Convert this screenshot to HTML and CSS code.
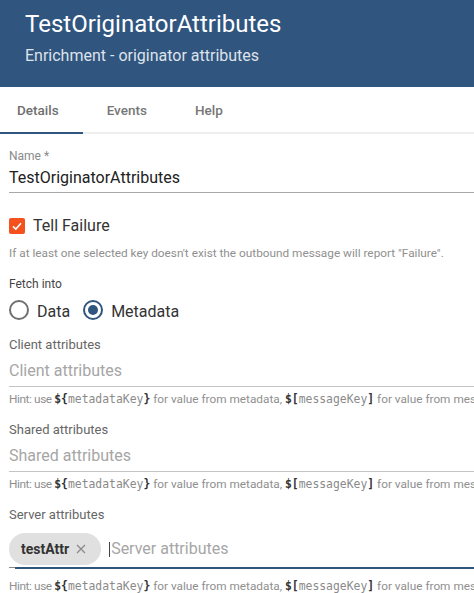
FILE: index.html
```html
<!DOCTYPE html>
<html lang="en">
<head>
<meta charset="utf-8">
<title>TestOriginatorAttributes</title>
<link rel="stylesheet" href="styles.css">
</head>
<body>
<div class="header">
  <div class="title">TestOriginatorAttributes</div>
  <div class="subtitle">Enrichment - originator attributes</div>
</div>
<div class="tabs">
  <div class="tab active">Details</div>
  <div class="tab">Events</div>
  <div class="tab">Help</div>
</div>
<div class="form">
  <div class="name-field">
    <div class="label">Name *</div>
    <div class="value">TestOriginatorAttributes</div>
  </div>
  <div class="checkbox-row">
    <span class="checkbox"><svg viewBox="0 0 16 16" width="16" height="16"><polyline points="4,8.3 6.8,11 12,5.2" fill="none" stroke="#fff" stroke-width="1.6"/></svg></span>
    <span class="cb-text">Tell Failure</span>
  </div>
  <div class="hint first-hint">If at least one selected key doesn't exist the outbound message will report "Failure".</div>
  <div class="fetch-label">Fetch into</div>
  <div class="radios">
    <span class="radio"></span><span class="radio-text">Data</span>
    <span class="radio checked"></span><span class="radio-text">Metadata</span>
  </div>
  <div class="attr">
    <div class="attr-label">Client attributes</div>
    <div class="attr-input"><span class="placeholder">Client attributes</span></div>
    <div class="hint"><span class="lead">Hint: use </span><code><b>${</b>metadataKey<b>}</b></code> for value from metadata, <code><b>$[</b>messageKey<b>]</b></code> for value from mess</div>
  </div>
  <div class="attr">
    <div class="attr-label">Shared attributes</div>
    <div class="attr-input"><span class="placeholder">Shared attributes</span></div>
    <div class="hint"><span class="lead">Hint: use </span><code><b>${</b>metadataKey<b>}</b></code> for value from metadata, <code><b>$[</b>messageKey<b>]</b></code> for value from mess</div>
  </div>
  <div class="attr">
    <div class="attr-label">Server attributes</div>
    <div class="chip-input">
      <span class="chip">testAttr<svg class="chip-x" viewBox="0 0 10 10" width="10" height="10"><path d="M1 1 L9 9 M9 1 L1 9" stroke="#8a8a8a" stroke-width="1.3"/></svg></span>
      <span class="cursor"></span><span class="placeholder">Server attributes</span>
    </div>
    <div class="hint"><span class="lead">Hint: use </span><code><b>${</b>metadataKey<b>}</b></code> for value from metadata, <code><b>$[</b>messageKey<b>]</b></code> for value from mess</div>
  </div>
</div>
</body>
</html>
```

FILE: styles.css
```css
html, body {
  margin: 0;
  padding: 0;
  background: #fff;
  overflow: hidden;
}
body {
  width: 474px;
  height: 593px;
  font-family: Roboto, "Liberation Sans", sans-serif;
  color: #212121;
}
.header {
  background: #305680;
  height: 87px;
  box-sizing: border-box;
  padding: 8px 0 0 25px;
}
.title {
  color: #fff;
  font-size: 24px;
  line-height: 32px;
  white-space: nowrap;
}
.subtitle {
  color: rgba(255, 255, 255, 0.85);
  font-size: 16px;
  line-height: 20px;
  margin-top: 6px;
  white-space: nowrap;
}
.tabs {
  display: flex;
  border-bottom: 2px solid #eeeeee;
}
.tab {
  font-size: 13.5px;
  font-weight: 500;
  color: #777;
  padding: 2px 24px 0 24px;
  line-height: 43px;
  margin-bottom: -2px;
  border-bottom: 2px solid transparent;
}
.tab:first-child {
  padding-left: 17px;
}
.tab.active {
  border-bottom-color: #305680;
  color: #6f6f6f;
}
.form {
  padding-left: 9px;
  white-space: nowrap;
}
.name-field {
  margin-top: 15px;
}
.label {
  font-size: 12px;
  line-height: 14px;
  color: #8a8a8a;
}
.value {
  font-size: 16px;
  line-height: 20px;
  margin-top: 5px;
  padding-bottom: 4px;
  border-bottom: 1px solid #a8a8a8;
  color: #212121;
}
.checkbox-row {
  display: flex;
  align-items: center;
  height: 20px;
  margin-top: 23px;
}
.checkbox {
  width: 16px;
  height: 16px;
  background: #f4511e;
  border-radius: 2px;
  display: flex;
}
.cb-text {
  font-size: 16px;
  line-height: 20px;
  margin-left: 8px;
  color: #333;
}
.hint {
  font-size: 11.8px;
  line-height: 14px;
  color: #8f8f8f;
}
.hint .lead {
  letter-spacing: -0.4px;
}
.first-hint {
  margin-top: 10px;
}
.hint code {
  font-family: "DejaVu Sans Mono", "Liberation Mono", monospace;
  font-size: 11.4px;
  line-height: 14px;
  color: #8a8a8a;
}
.hint code b {
  color: #333;
  font-weight: bold;
}
.fetch-label {
  font-size: 12px;
  line-height: 14px;
  color: #444;
  margin-top: 17px;
}
.radios {
  display: flex;
  align-items: flex-start;
  margin-top: 9px;
}
.radio {
  width: 20px;
  height: 20px;
  box-sizing: border-box;
  border: 2px solid #707070;
  border-radius: 50%;
  display: flex;
  align-items: center;
  justify-content: center;
}
.radio.checked {
  border-color: #305680;
  margin-left: 13px;
}
.radio.checked::after {
  content: "";
  width: 10px;
  height: 10px;
  border-radius: 50%;
  background: #305680;
}
.radio-text {
  font-size: 16px;
  line-height: 23px;
  margin-left: 8px;
  color: #333;
}
.attr {
  margin-top: 14px;
}
.attr + .attr {
  margin-top: 16px;
}
.attr-label {
  font-size: 13px;
  line-height: 15px;
  color: #666;
}
.attr-input {
  margin-top: 9px;
  font-size: 16px;
  line-height: 20px;
  padding-bottom: 5px;
  border-bottom: 1px solid #c4c4c4;
  margin-bottom: 5px;
}
.placeholder {
  color: #a6a6a6;
  font-size: 16px;
  line-height: 20px;
}
.chip-input {
  display: flex;
  align-items: center;
  margin-top: 11px;
  padding-bottom: 4px;
  background:
    linear-gradient(#305680, #305680) 6px 100% / calc(100% - 6px) 2px no-repeat,
    linear-gradient(#8a8a8a, #8a8a8a) 0 calc(100% - 1px) / 100% 1px no-repeat;
  margin-bottom: 10px;
}
.chip {
  display: flex;
  align-items: center;
  height: 32px;
  box-sizing: border-box;
  padding: 0 15px 0 12px;
  border-radius: 16px;
  background: #e0e0e0;
  font-size: 14px;
  font-weight: bold;
  color: #333;
}
.chip-x {
  margin-left: 7px;
}
.cursor {
  width: 1px;
  height: 15px;
  background: #444;
  margin-left: 8px;
  margin-right: 1px;
}
```
